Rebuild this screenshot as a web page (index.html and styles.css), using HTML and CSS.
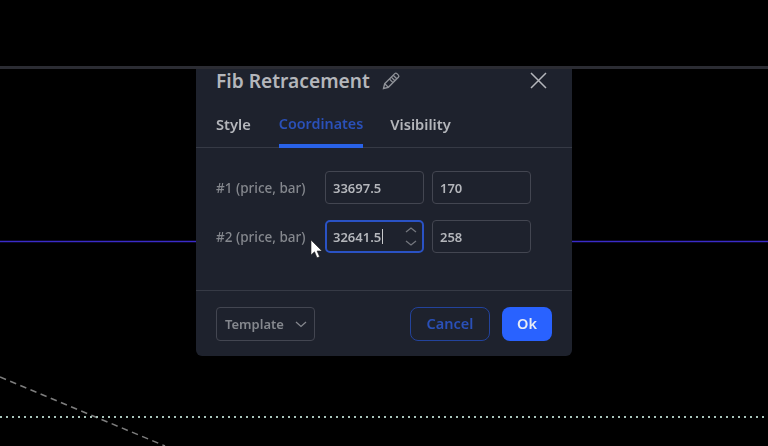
FILE: index.html
```html
<!DOCTYPE html>
<html lang="en">
<head>
    <meta charset="UTF-8">
    <title>Fib Retracement</title>
    <link rel="stylesheet" href="styles.css">
</head>
<body>
    <div class="chart">
        <!-- chart lines behind the dialog -->
        <svg class="chart-lines" width="768" height="446" viewBox="0 0 768 446">
            <line x1="0" y1="241.5" x2="768" y2="241.5" stroke="#3a2bc8" stroke-width="1.6"/>
            <line x1="0" y1="377" x2="165" y2="446" stroke="#7d7d7d" stroke-width="1.5" stroke-dasharray="6.5 4.5"/>
            <line x1="0" y1="417" x2="768" y2="417" stroke="#a8c4ba" stroke-width="2" stroke-dasharray="2 4"/>
        </svg>

        <div class="dialog">
            <div class="dialog-head">
                <span class="dialog-title">Fib Retracement</span>
                <svg class="pencil" width="20" height="20" viewBox="0 0 20 20" fill="none" stroke="#8f9298" stroke-width="1.3">
                    <path d="M2.5 17.5l1.2-4.8L13.8 2.6a1.5 1.5 0 0 1 2.1 0l1.5 1.5a1.5 1.5 0 0 1 0 2.1L7.3 16.3z"/>
                    <path d="M3.7 12.7l3.6 3.6M12.2 4.2l3.6 3.6M10.3 6.1l3.600 3.600M8.400 8l3.600 3.600"/>
                </svg>
                <svg class="close" width="17" height="17" viewBox="0 0 17 17" stroke="#b4b6bb" stroke-width="1.5">
                    <path d="M1 1l15 15M16 1L1 16"/>
                </svg>
            </div>

            <div class="tabs">
                <div class="tab">Style</div>
                <div class="tab active">Coordinates</div>
                <div class="tab">Visibility</div>
            </div>

            <div class="coords">
                <div class="row">
                    <span class="row-label">#1 (price, bar)</span>
                    <div class="field">33697.5</div>
                    <div class="field">170</div>
                </div>
                <div class="row">
                    <span class="row-label">#2 (price, bar)</span>
                    <div class="field focused">
                        <span class="value">32641.5</span><span class="caret"></span>
                        <svg class="stepper" width="12" height="24" viewBox="0 0 12 24" fill="none" stroke="#74777e" stroke-width="1.3">
                            <path d="M1 6l5-4 5 4M1 15l5 4 5-4"/>
                        </svg>
                    </div>
                    <div class="field">258</div>
                </div>
            </div>

            <div class="dialog-foot">
                <div class="template">
                    Template
                    <svg width="12" height="7" viewBox="0 0 12 7" fill="none" stroke="#85888e" stroke-width="1.3">
                        <path d="M1 1l5 4.500 5-4.500"/>
                    </svg>
                </div>
                <button class="btn btn-cancel">Cancel</button>
                <button class="btn btn-ok">Ok</button>
            </div>
        </div>

        <div class="top-line"></div>

        <!-- mouse pointer -->
        <svg class="pointer" width="13" height="20" viewBox="0 0 13 20">
            <path d="M1 1v15l3.500-3.200 2.500 6 2.600-1.100-2.500-5.700H12z" fill="#fff" stroke="#222" stroke-width="0.6"/>
        </svg>
    </div>
</body>
</html>
```

FILE: styles.css
```css
* {
    box-sizing: border-box;
}

body {
    margin: 0;
    background-color: #000;
    font-family: "Noto Sans", Arial, sans-serif;
    overflow: hidden;
}

.chart {
    position: relative;
    width: 768px;
    height: 446px;
    overflow: hidden;
    filter: blur(0.4px);
}

.chart-lines {
    position: absolute;
    left: 0;
    top: 0;
}

.top-line {
    position: absolute;
    left: 0;
    top: 66px;
    width: 768px;
    height: 3px;
    background-color: #2b2c33;
}

.dialog {
    position: absolute;
    left: 196px;
    top: 67px;
    width: 376px;
    height: 289px;
    display: flex;
    flex-direction: column;
    background-color: #1e222d;
    border-radius: 0 0 6px 6px;
}

.dialog-head {
    display: flex;
    align-items: center;
    height: 29px;
    padding: 0 25px 2px 20px;
}

.dialog-title {
    color: #b4b6bb;
    font-size: 19.2px;
    font-weight: 600;
    line-height: 27px;
    white-space: nowrap;
}

.pencil {
    margin-left: 11px;
}

.close {
    margin-left: auto;
}

.tabs {
    display: flex;
    height: 52px;
    padding-left: 20px;
    border-bottom: 1px solid #363a45;
}

.tab {
    height: 52px;
    padding-top: 17px;
    color: #b4b6bb;
    font-size: 14.7px;
    font-weight: 600;
    line-height: 22px;
}

.tab.active {
    margin: 0 27px 0 28px;
    color: #2a50b8;
    border-bottom: 4px solid #2962e8;
    font-size: 14.3px;
}

.coords {
    display: flex;
    flex-direction: column;
    gap: 16px;
    height: 143px;
    padding: 23px 0 0 20px;
    border-bottom: 1px solid #363a45;
}

.row {
    display: flex;
    align-items: center;
    gap: 8px;
}

.row-label {
    width: 101px;
    color: #85888e;
    font-size: 13.5px;
    font-weight: 500;
    white-space: nowrap;
}

.field {
    position: relative;
    display: flex;
    align-items: center;
    width: 99px;
    height: 33px;
    padding-left: 7px;
    border: 1px solid #434651;
    border-radius: 4px;
    color: #b4b6bb;
    font-size: 13px;
    font-weight: 600;
}

.field.focused {
    border: 2px solid #2a52c4;
    padding-left: 6px;
    border-radius: 5px;
}

.caret {
    width: 1px;
    height: 15px;
    margin-left: 1px;
    background-color: #c8c9cc;
}

.stepper {
    position: absolute;
    right: 5px;
    top: 4px;
}

.dialog-foot {
    display: flex;
    align-items: center;
    padding: 16px 20px 0 20px;
}

.template {
    display: flex;
    align-items: center;
    justify-content: space-between;
    width: 99px;
    height: 34px;
    padding: 0 7px 0 8px;
    border: 1px solid #434651;
    border-radius: 4px;
    color: #85888e;
    font-size: 13px;
    font-weight: 600;
}

.btn {
    height: 34px;
    border-radius: 8px;
    font-family: inherit;
    font-size: 14.5px;
    font-weight: 600;
    padding: 0 0 2px;
}

.btn-cancel {
    width: 80px;
    margin-left: auto;
    background-color: transparent;
    border: 1.5px solid #23439c;
    color: #2a50b8;
}

.btn-ok {
    width: 50px;
    margin-left: 12px;
    background-color: #2962ff;
    border: none;
    color: #e8ecf5;
}

.pointer {
    position: absolute;
    left: 310px;
    top: 239px;
}
```
